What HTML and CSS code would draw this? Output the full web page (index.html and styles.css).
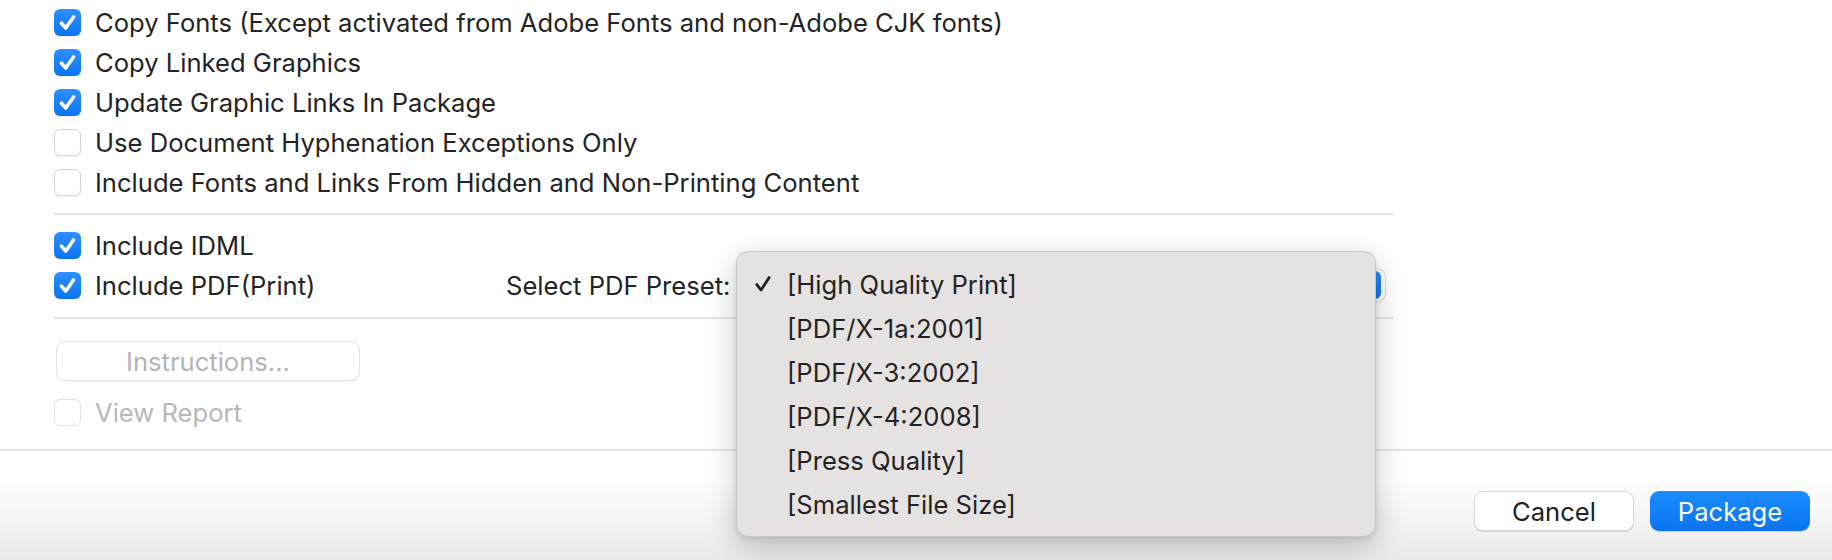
FILE: index.html
```html
<!DOCTYPE html>
<html>
<head>
<meta charset="utf-8">
<link rel="stylesheet" href="styles.css">
</head>
<body>
<div class="dialog">
  <div class="content">
    <div class="group first">
      <label class="row"><span class="cb on"><svg viewBox="0 0 27 27"><path d="M7.5 14.2 L11.8 19 L19.5 8" /></svg></span><span class="txt" id="t1">Copy Fonts (Except activated from Adobe Fonts and non-Adobe CJK fonts)</span></label>
      <label class="row"><span class="cb on"><svg viewBox="0 0 27 27"><path d="M7.5 14.2 L11.8 19 L19.5 8" /></svg></span><span class="txt">Copy Linked Graphics</span></label>
      <label class="row"><span class="cb on"><svg viewBox="0 0 27 27"><path d="M7.5 14.2 L11.8 19 L19.5 8" /></svg></span><span class="txt">Update Graphic Links In Package</span></label>
      <label class="row"><span class="cb"></span><span class="txt">Use Document Hyphenation Exceptions Only</span></label>
      <label class="row"><span class="cb"></span><span class="txt">Include Fonts and Links From Hidden and Non-Printing Content</span></label>
    </div>
    <div class="sep"></div>
    <div class="group second">
      <label class="row"><span class="cb on"><svg viewBox="0 0 27 27"><path d="M7.5 14.2 L11.8 19 L19.5 8" /></svg></span><span class="txt">Include IDML</span></label>
      <div class="row">
        <label class="pdf"><span class="cb on"><svg viewBox="0 0 27 27"><path d="M7.5 14.2 L11.8 19 L19.5 8" /></svg></span><span class="txt">Include PDF(Print)</span></label>
        <span class="preset-label">Select PDF Preset:</span>
        <div class="popup"><span class="popup-arrow"></span></div>
      </div>
    </div>
    <div class="sep"></div>
    <div class="group third">
      <button class="instr">Instructions...</button>
      <label class="row disabled"><span class="cb"></span><span class="txt">View Report</span></label>
    </div>
  </div>
  <div class="footer">
    <button class="btn cancel">Cancel</button>
    <button class="btn primary">Package</button>
  </div>

  <div class="menu">
    <div class="item"><span class="mark"><svg viewBox="0 0 16 16"><path d="M1.8 8.6 L6 14 L14.2 1.6" /></svg></span>[High Quality Print]</div>
    <div class="item"><span class="mark"></span>[PDF/X-1a:2001]</div>
    <div class="item"><span class="mark"></span>[PDF/X-3:2002]</div>
    <div class="item"><span class="mark"></span>[PDF/X-4:2008]</div>
    <div class="item"><span class="mark"></span>[Press Quality]</div>
    <div class="item"><span class="mark"></span>[Smallest File Size]</div>
  </div>
</div>
</body>
</html>
```

FILE: styles.css
```css
* { box-sizing: border-box; }
html, body {
  margin: 0;
  padding: 0;
  background: #ffffff;
}
body {
  width: 1832px;
  height: 560px;
  overflow: hidden;
  font-family: "Inter", "Noto Sans", sans-serif;
  font-size: 25.6px;
  color: #242424;
}
.dialog {
  position: relative;
  width: 1832px;
  height: 560px;
  display: flex;
  flex-direction: column;
}
.content {
  padding-left: 54px;
  width: 1393px;
}
.group.first { padding-top: 2px; }
.group.second { margin-top: 10px; }
.group.third { margin-top: 22px; }
.row {
  display: flex;
  align-items: center;
  height: 40px;
}
.pdf {
  display: flex;
  align-items: center;
  width: 452px;
}
.cb {
  flex: none;
  width: 27px;
  height: 27px;
  border-radius: 6px;
  background: #ffffff;
  border: 1px solid #d4d4d4;
  box-shadow: 0 1px 1px rgba(0,0,0,0.06);
  margin-right: 14px;
  display: flex;
}
.cb.on {
  border: none;
  background: linear-gradient(to bottom, #2f90ff, #0a74f4);
}
.cb svg {
  width: 27px;
  height: 27px;
}
.cb svg path {
  fill: none;
  stroke: #ffffff;
  stroke-width: 3.6;
  stroke-linecap: round;
  stroke-linejoin: round;
}
.txt { white-space: nowrap; }
.sep {
  height: 2px;
  background: #e4e4e4;
  margin-top: 11px;
}
.group.second + .sep { margin-top: 12px; }
.preset-label {
  white-space: nowrap;
}
.popup {
  flex: 1;
  height: 32px;
  margin-left: 12px;
  margin-right: 8px;
  background: #ffffff;
  border-radius: 8px;
  box-shadow: 0 0 0 1px #dedede, 0 1px 2px rgba(0,0,0,0.15);
  display: flex;
  justify-content: flex-end;
}
.popup-arrow {
  width: 32px;
  height: 28px;
  margin: 2px 4px 2px 0;
  border-radius: 6px;
  background: linear-gradient(to bottom, #2f90ff, #0a74f4);
}
.instr {
  display: block;
  width: 304px;
  height: 40px;
  margin-left: 2px;
  font: inherit;
  color: #b4b4b4;
  background: #ffffff;
  border: 1px solid #e6e6e6;
  border-radius: 9px;
  box-shadow: 0 1px 1px rgba(0,0,0,0.05);
  padding: 0;
}
.third .row { margin-top: 11.5px; }
.row.disabled .txt { color: #b8b8b8; }
.row.disabled .cb { border-color: #e2e2e2; box-shadow: none; }
.footer {
  margin-top: auto;
  height: 111px;
  border-top: 2px solid #e4e4e4;
  background: linear-gradient(to bottom, #ffffff 0%, #ffffff 25%, #eaeaea 100%);
  display: flex;
  justify-content: flex-end;
  align-items: flex-start;
  padding: 40px 22px 0 0;
  gap: 16px;
}
.btn {
  width: 160px;
  height: 40px;
  font: inherit;
  border-radius: 9px;
  padding: 0;
}
.btn.cancel {
  background: #ffffff;
  color: #222;
  border: 1px solid #d8d8d8;
  box-shadow: 0 1px 1px rgba(0,0,0,0.12);
}
.btn.primary {
  background: linear-gradient(to bottom, #1b8dff, #0a74ef);
  color: #ffffff;
  border: none;
  box-shadow: 0 1px 1px rgba(0,0,0,0.12);
}
.menu {
  position: absolute;
  left: 736px;
  top: 251px;
  width: 640px;
  height: 286px;
  padding: 10px 0 12px;
  background: #e6e2e2;
  border: 1px solid #c9c6c6;
  border-radius: 12px;
  box-shadow: 0 10px 30px rgba(0,0,0,0.22), 0 2px 6px rgba(0,0,0,0.08);
}
.item {
  height: 44px;
  display: flex;
  align-items: center;
  padding-left: 18px;
  white-space: nowrap;
  color: #232323;
}
.mark {
  width: 32px;
  height: 16px;
  display: flex;
}
.mark svg {
  width: 16px;
  height: 16px;
}
.mark svg path {
  fill: none;
  stroke: #1e1e1e;
  stroke-width: 2.8;
  stroke-linecap: round;
  stroke-linejoin: round;
}
```
